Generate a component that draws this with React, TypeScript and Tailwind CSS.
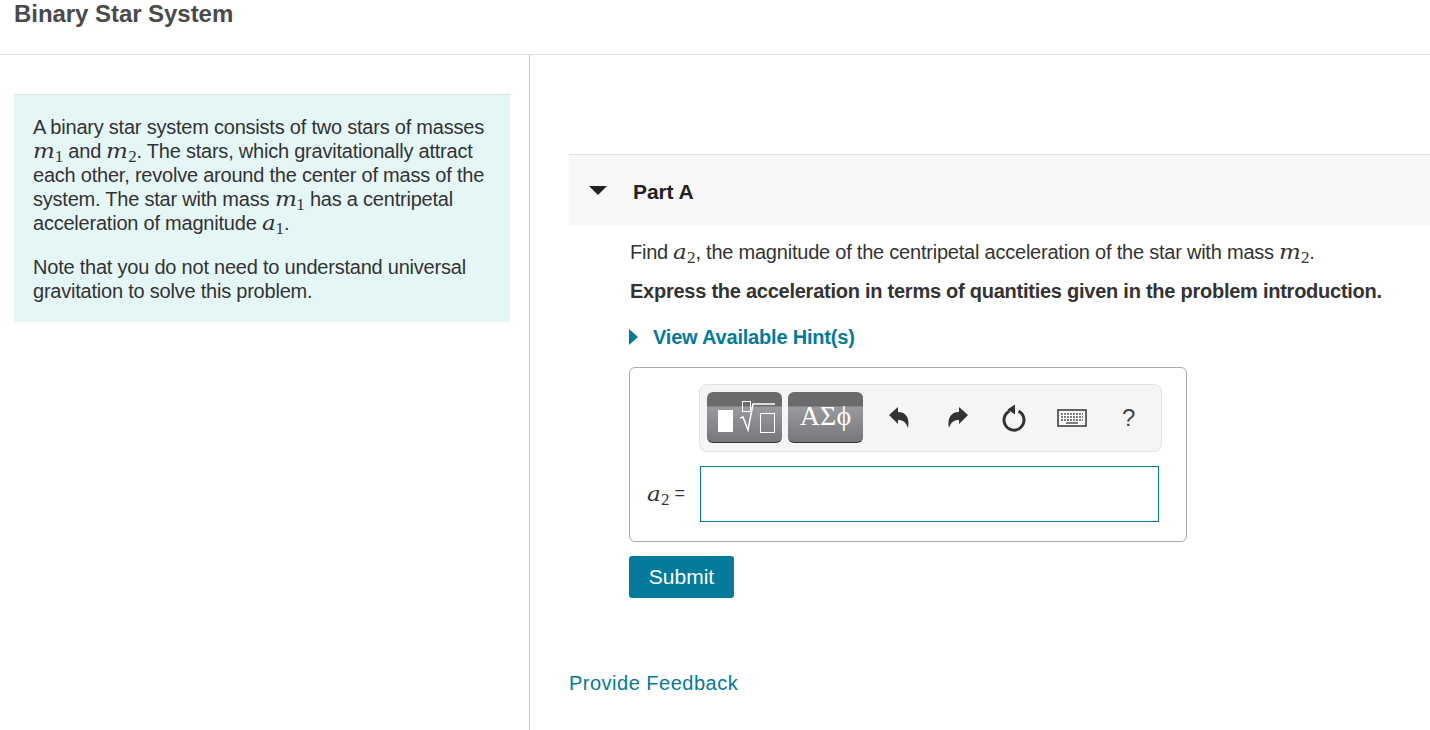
function V({ n, sub }: { n: string; sub: string }) {
  return (
    <span className="whitespace-nowrap text-[#333]">
      <i className={`inline-block origin-left font-['DejaVu_Serif'] text-[20px] leading-none ${n === "m" ? "mr-[3px] scale-x-[1.15]" : "mr-[2px] scale-x-[1.15]"}`}>{n}</i>
      <span className="relative bottom-[-4px] font-['Liberation_Serif'] text-[17px] leading-none">{sub}</span>
    </span>
  );
}

function Keyboard() {
  return (
    <svg width="30" height="18" viewBox="0 0 30 18">
      <rect x="1" y="1" width="28" height="16" fill="#fff" stroke="#333" strokeWidth="1.5" />
      <path d="M4 5h22M4 8h22M4 11h22" stroke="#555" strokeWidth="1.5" strokeDasharray="2 1" />
      <path d="M9 14h12" stroke="#555" strokeWidth="1.5" />
    </svg>
  );
}

function Reset() {
  return (
    <svg width="26" height="28" viewBox="0 0 26 28">
      <path d="M8.5 7.2a10 10 0 1 0 9 0" fill="none" stroke="#333" strokeWidth="3" />
      <path d="M15 0.5v10l-7.5-5z" fill="#333" transform="translate(-1 0)" />
    </svg>
  );
}

const btn =
  "mb-[1px] rounded-[6px] border-b border-[#333] bg-[linear-gradient(#6b6b6d_0,#6b6b6d_14px,#9a9a9e_15px,#77777b_100%)]";

export default function App() {
  return (
    <div className="h-[730px] w-[1430px] overflow-hidden bg-white font-['Liberation_Sans',sans-serif] text-[#333]">
      <header className="h-[55px] border-b border-[#e0e0e0] pl-[14px]">
        <h1 className="text-[24px] font-bold leading-[28px] tracking-[-0.05px] text-[#4a4a4a]">Binary Star System</h1>
      </header>
      <div className="flex h-[675px]">
        <aside className="w-[530px] shrink-0 border-r border-[#c8c8c8] pl-[14px] pr-[19px] pt-[39px]">
          <div className="h-[228px] border-t border-[#dedede] bg-[#e5f6f7] px-[19px] pt-[20px] text-[20px] leading-[24px] tracking-[-0.22px]">
            <p>
              A binary star system consists of two stars of masses <V n="m" sub="1" /> and <V n="m" sub="2" />. The
              stars, which gravitationally attract each other, revolve around the center of mass of the system. The
              star with mass <V n="m" sub="1" /> has a centripetal acceleration of magnitude <V n="a" sub="1" />.
            </p>
            <p className="mt-[20px]">
              Note that you do not need to understand universal gravitation to solve this problem.
            </p>
          </div>
        </aside>
        <main className="min-w-0 flex-1 pl-[39px] pt-[99px]">
          <div className="flex h-[71px] items-center border-t border-[#e0e0e0] bg-[#f8f8f8]">
            <div className="ml-[20px] h-0 w-0 border-x-[9px] border-t-[9px] border-x-transparent border-t-[#222]" />
            <h2 className="ml-[26px] mt-[3px] text-[21px] font-bold tracking-[-0.1px] text-[#222]">Part A</h2>
          </div>
          <div className="pl-[60px]">
            <p className="ml-[1px] mt-[13px] text-[20px] leading-[28px] tracking-[-0.22px]">
              Find <V n="a" sub="2" />, the magnitude of the centripetal acceleration of the star with mass{" "}
              <V n="m" sub="2" />.
            </p>
            <p className="ml-[1px] mt-[11px] text-[20px] font-bold leading-[28px] tracking-[-0.25px]">
              Express the acceleration in terms of quantities given in the problem introduction.
            </p>
            <div className="mt-[18px] flex items-center text-[#047a9c]">
              <div className="h-0 w-0 border-y-[8px] border-l-[9px] border-y-transparent border-l-[#047a9c]" />
              <span className="ml-[15px] text-[20px] font-bold leading-[28px] tracking-[-0.2px]">View Available Hint(s)</span>
            </div>
            <div className="mt-[16px] h-[175px] w-[558px] rounded-[6px] border border-[#a8a8a8] pl-[69px] pt-[16px]">
              <div className="flex h-[68px] w-[463px] items-center rounded-[8px] border border-[#e3e3e3] bg-[#f5f5f5] pl-[7px]">
                <div className={`relative flex h-[51px] w-[75px] items-center ${btn}`}>
                  <div className="ml-[11px] mt-[8px] h-[22px] w-[15px] bg-white" />
                  <svg className="absolute left-[33px] top-[7px]" width="38" height="36" viewBox="0 0 38 36" fill="none" stroke="#fff">
                    <rect x="2.5" y="2.5" width="8" height="10" />
                    <path d="M0 19l3-1 5 13L13 5h22" strokeWidth="1.5" />
                    <rect x="20.5" y="14.5" width="14" height="19" />
                  </svg>
                </div>
                <div className={`ml-[6px] flex h-[51px] w-[75px] items-center justify-center pb-[2px] font-['Liberation_Serif'] text-[28px] text-white ${btn}`}>
                  ΑΣϕ
                </div>
                <svg className="ml-[26px]" width="22" height="24" viewBox="0 0 22 24">
                  <path d="M0 9 9 1v5c8 0 12 6 10 16-2-6-5-8-10-8v4z" fill="#333" />
                </svg>
                <svg className="ml-[35px]" width="22" height="24" viewBox="0 0 22 24">
                  <path d="M22 9 13 1v5C5 6 1 12 3 22c2-6 5-8 10-8v4z" fill="#333" />
                </svg>
                <div className="ml-[33px]"><Reset /></div>
                <div className="ml-[30px]"><Keyboard /></div>
                <span className="ml-[35px] text-[24px] text-[#444]">?</span>
              </div>
              <div className="mt-[14px] flex items-center">
                <div className="-ml-[52px] w-[52px] whitespace-nowrap text-[18px] leading-none text-[#333]">
                  <V n="a" sub="2" /> <span className="relative top-[-2px] text-[18px]">=</span>
                </div>
                <div className="ml-[1px] h-[56px] w-[459px] border border-[#047a9c] bg-white" />
              </div>
            </div>
            <button className="mt-[14px] h-[42px] w-[105px] rounded-[3px] bg-[#047a9c] text-[21px] text-white">Submit</button>
          </div>
          <a className="mt-[71px] block text-[20px] leading-[28px] tracking-[0.5px] text-[#047a9c]">Provide Feedback</a>
        </main>
      </div>
    </div>
  );
}
